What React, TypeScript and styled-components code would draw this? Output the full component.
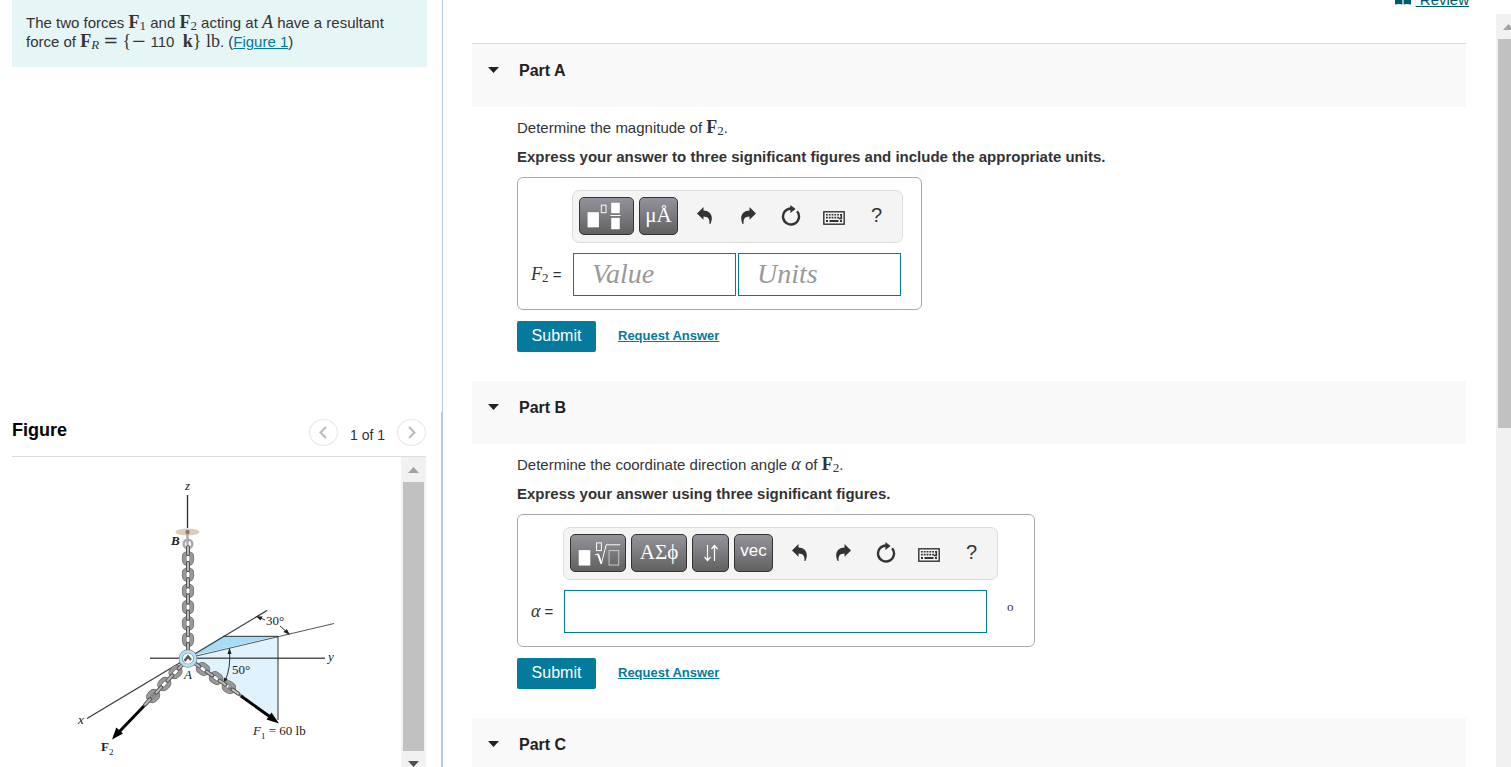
import React from "react";
import styled, { createGlobalStyle } from "styled-components";

const sans = `"Liberation Sans", Arial, sans-serif`;
const serif = `"Liberation Serif", "Times New Roman", serif`;

const GlobalStyle = createGlobalStyle`
  * { box-sizing: border-box; }
  body { margin: 0; background: #fff; color: #333; font-family: ${sans}; font-size: 15px; line-height: 19px; }
  button, input { font: inherit; color: inherit; }
  h2, h3, p { margin: 0; }
`;

const Page = styled.div`
  display: flex;
  height: 100vh;
  overflow: hidden;
`;

const LeftPane = styled.aside`
  flex: 0 0 443px;
  display: flex;
  flex-direction: column;
`;

const ProblemArea = styled.section`
  flex: 0 0 412px;
  padding: 0 15px 0 12px;
  border-right: 1px solid #b9cbe0;
`;

const ProblemBox = styled.div`
  padding: 13px 14px 16px;
  background: #e6f6f6;
`;

const FigureArea = styled.section`
  flex: 1;
  display: flex;
  flex-direction: column;
  min-height: 0;
  padding: 0 15px 0 12px;
  border-right: 2px solid #b9cbe0;
`;

const FigureHeader = styled.header`
  display: flex;
  justify-content: space-between;
  flex: 0 0 45px;
  padding-top: 7px;
  border-bottom: 1px solid #ddd;
`;

const FigureTitle = styled.h2`
  color: #000;
  font-size: 18px;
  line-height: 22px;
`;

const Pager = styled.div`
  display: flex;
  gap: 12px;
  height: 27px;
  font-size: 14px;
  line-height: 32px;
`;

const PagerButton = styled.button`
  display: flex;
  align-items: center;
  justify-content: center;
  width: 29px;
  height: 27px;
  padding: 0;
  border: 1px solid #e6e6e6;
  border-radius: 50%;
  background: #fff;
`;

const FigureViewport = styled.div`
  flex: 1;
  display: flex;
  min-height: 0;
  overflow: hidden;
`;

const FigureCanvas = styled.div`
  flex: 1;
  min-width: 0;
  svg { display: block; }
`;

const Track = styled.div<{ $width: number; $top?: number }>`
  flex: 0 0 ${(p) => p.$width}px;
  display: flex;
  flex-direction: column;
  align-items: flex-start;
  overflow: hidden;
  margin-top: ${(p) => p.$top ?? 0}px;
  padding-left: 2px;
  background: #f1f1f1;
`;

const TrackArrow = styled.div`
  flex: 0 0 25px;
  width: 21px;
  display: flex;
  align-items: center;
  justify-content: center;
`;

const Thumb = styled.div<{ $length: number }>`
  flex: 0 0 ${(p) => p.$length}px;
  width: 21px;
  background: #c1c1c1;
`;

const RightPane = styled.div`
  flex: 1;
  display: flex;
  min-width: 0;
`;

const Content = styled.main`
  flex: 1;
  min-width: 0;
  padding: 0 30px 0 29px;
`;

const ReviewBar = styled.div`
  display: flex;
  justify-content: flex-end;
  align-items: flex-start;
  gap: 5px;
  height: 43px;
  margin-right: -3px;
  overflow: hidden;
`;

const ReviewLink = styled.a`
  margin-top: -10px;
  color: #005a70;
  white-space: pre;
`;

const Part = styled.section<{ $ruled?: boolean }>`
  height: ${(p) => (p.$ruled ? 338 : 337)}px;
  border-top: ${(p) => (p.$ruled ? "1px solid #ddd" : "0")};
`;

const PartHeader = styled.button`
  display: flex;
  align-items: flex-start;
  gap: 20px;
  width: 100%;
  height: 63px;
  padding: 17px 16px;
  border: 0;
  background: #f9f9f9;
  text-align: left;
  svg { margin-top: 6px; }
`;

const PartTitle = styled.span`
  color: #222;
  font-size: 16px;
  font-weight: bold;
  line-height: 20px;
`;

const PartBody = styled.div`
  padding: 11px 45px 0;
`;

const Prompt = styled.p`
  margin-bottom: 10px;
`;

const Instruction = styled.p`
  margin-bottom: 11px;
  font-weight: bold;
`;

const AnswerBox = styled.div`
  width: fit-content;
  margin-bottom: 11px;
  padding: 12px 18px 13px 13px;
  border: 1px solid #aaa;
  border-radius: 6px;
`;

const Toolbar = styled.div<{ $indent: number }>`
  display: flex;
  align-items: center;
  width: fit-content;
  height: 53px;
  margin: 0 0 10px ${(p) => p.$indent}px;
  padding: 0 4px 2px 6px;
  border: 1px solid #ddd;
  border-radius: 7px;
  background: #f4f4f4;
`;

const DarkButton = styled.button<{ $width: number }>`
  display: flex;
  align-items: center;
  justify-content: center;
  width: ${(p) => p.$width}px;
  height: 38px;
  margin-right: 5px;
  padding: 0;
  border: 1px solid #333;
  border-radius: 5px;
  background: linear-gradient(#94939c, #616161);
  color: #fff;
`;

const SerifGlyphs = styled.span`
  font-family: ${serif};
  font-size: 21px;
`;

const VecText = styled.span`
  padding-bottom: 4px;
  font-size: 17px;
`;

const ToolButton = styled.button`
  display: flex;
  align-items: center;
  justify-content: center;
  width: 43px;
  height: 38px;
  padding: 0;
  border: 0;
  background: transparent;
  color: #333;
  font-size: 20px;
`;

const FieldRow = styled.div`
  display: flex;
  align-items: center;
`;

const FieldLabel = styled.label<{ $width: number }>`
  width: ${(p) => p.$width}px;
  white-space: nowrap;
`;

const Field = styled.input<{ $width: number }>`
  width: ${(p) => p.$width}px;
  height: 43px;
  margin-right: 2px;
  padding: 0 19px 2px 18px;
  border: 1px solid #047a9c;
  border-radius: 0;
  outline: 0;
  background: #fff;
  font-family: ${serif};
  font-size: 28px;
  &::placeholder { color: #999; font-style: italic; opacity: 1; }
`;

const Degree = styled.span`
  padding: 0 2px 10px 18px;
  font-size: 13px;
  font-family: ${serif};
`;

const Actions = styled.div`
  display: flex;
  align-items: center;
  gap: 22px;
`;

const SubmitButton = styled.button`
  width: 79px;
  height: 31px;
  padding: 0 0 2px;
  border: 0;
  border-radius: 2px;
  background: #047a9c;
  color: #fff;
  font-size: 16px;
`;

const TextLink = styled.a`
  color: #047a9c;
`;

const RequestLink = styled.a`
  color: #047a9c;
  font-size: 13px;
  font-weight: bold;
  margin-bottom: 2px;
`;

const MathText = styled.span<{ $bold?: boolean; $italic?: boolean }>`
  font-family: ${serif};
  font-size: 18px;
  line-height: 0;
  font-weight: ${(p) => (p.$bold ? "bold" : "normal")};
  font-style: ${(p) => (p.$italic ? "italic" : "normal")};
`;

const MathSign = styled.span`
  font-family: "DejaVu Serif", serif;
  font-size: 18px;
  line-height: 0;
`;

const Sub = styled.sub<{ $italic?: boolean }>`
  font-family: ${serif};
  font-size: 13px;
  line-height: 0;
  vertical-align: -2px;
  font-weight: normal;
  font-style: ${(p) => (p.$italic ? "italic" : "normal")};
`;

const VectorF = ({ sub }: { sub: string }) => (
  <>
    <MathText $bold>F</MathText>
    <Sub $italic={sub === "R"}>{sub}</Sub>
  </>
);

const Triangle = ({ color, down }: { color: string; down?: boolean }) => (
  <svg width="11" height="6" viewBox="0 0 11 6" aria-hidden="true">
    <path d={down ? "M0 0H11L5.5 6Z" : "M0 6H11L5.5 0Z"} fill={color} />
  </svg>
);

const Chevron = ({ right }: { right?: boolean }) => (
  <svg width="8" height="13" viewBox="0 0 8 13" fill="none" stroke="#bbb" strokeWidth="2">
    <path d={right ? "M1 1L6.5 6.5L1 12" : "M7 1L1.5 6.5L7 12"} />
  </svg>
);

const arrowPath = "M0 6.5L6.5 0V3.4C12.8 3.6 17.2 8.4 13.4 17H12.4C12.9 11.6 11 9.6 6.5 9.4V12.8Z";

const UndoIcon = () => (
  <svg width="16" height="17" viewBox="0 0 16 17"><path d={arrowPath} fill="#333" /></svg>
);

const RedoIcon = () => (
  <svg width="16" height="17" viewBox="0 0 16 17">
    <path d={arrowPath} fill="#333" transform="translate(16 0) scale(-1 1)" />
  </svg>
);

const ResetIcon = () => (
  <svg width="20" height="21" viewBox="0 0 20 21" fill="none">
    <path d="M16.1 6.3A8 8 0 1 1 10 3.5" stroke="#333" strokeWidth="2.4" />
    <path d="M9.4 0L14.6 4L9.4 8Z" fill="#333" />
  </svg>
);

const KeyboardIcon = () => (
  <svg width="22" height="18" viewBox="0 0 22 18" fill="none" stroke="#333">
    <rect x="0.8" y="4.8" width="20.4" height="12.4" strokeWidth="1.4" />
    <path d="M3 7.8H18M3 10.6H16" strokeWidth="1.6" strokeDasharray="1.8 1" />
    <path d="M3 14H5M6.5 14H15.5M17 14H19" strokeWidth="1.8" />
    <path d="M18.3 7V11.5H16" strokeWidth="1.6" />
  </svg>
);

const FractionIcon = () => (
  <svg width="56" height="36" viewBox="0 0 56 36" fill="#fff">
    <rect x="8" y="14" width="12" height="16" />
    <rect x="22.5" y="6.5" width="5" height="8" fill="none" stroke="#fff" />
    <rect x="33" y="4" width="9" height="11" />
    <rect x="32" y="17" width="11" height="1" />
    <rect x="33" y="20" width="9" height="12" />
  </svg>
);

const RootIcon = () => (
  <svg width="56" height="36" viewBox="0 0 56 36" fill="none" stroke="#fff">
    <rect x="8" y="15" width="12" height="16" fill="#fff" stroke="none" />
    <rect x="26.5" y="7.5" width="5" height="8" />
    <path d="M25 20L28 19L31.5 29L36.5 9.5H51" />
    <path d="M28 19L31.5 29" strokeWidth="2" />
    <rect x="39.5" y="15.5" width="10" height="15" stroke="#ccc" />
  </svg>
);

const UpDownIcon = () => (
  <svg width="16" height="18" viewBox="0 0 16 18" fill="none" stroke="#fff" strokeWidth="1.2">
    <path d="M4.5 1V16M1.5 13L4.5 16.5L7.5 13M11.5 17V2M8.5 5L11.5 1.5L14.5 5" />
  </svg>
);

const BookIcon = () => (
  <svg width="16" height="5" viewBox="0 0 16 5" fill="#005a70">
    <path d="M0 0H7.4V4.4Q4 3.6 0 4.6ZM8.6 0H16V4.6Q12 3.6 8.6 4.4Z" />
  </svg>
);

const CommonTools = () => (
  <>
    <ToolButton type="button" aria-label="Undo"><UndoIcon /></ToolButton>
    <ToolButton type="button" aria-label="Redo"><RedoIcon /></ToolButton>
    <ToolButton type="button" aria-label="Reset"><ResetIcon /></ToolButton>
    <ToolButton type="button" aria-label="Keyboard shortcuts"><KeyboardIcon /></ToolButton>
    <ToolButton type="button">?</ToolButton>
  </>
);

/* One run of chain: face-on links joined by edge-on links, drawn along +y. */
const Chain = ({ x, y, angle, count, pitch }: { x: number; y: number; angle: number; count: number; pitch: number }) => (
  <g transform={`translate(${x} ${y}) rotate(${angle})`}>
    {Array.from({ length: count }, (_, i) => (
      <g key={i} transform={`translate(0 ${i * pitch})`}>
        <rect x="-3.8" y="-5" width="7.6" height="10" rx="3.4" fill="none" stroke="#666" strokeWidth="4.6" />
        <rect x="-3.8" y="-5" width="7.6" height="10" rx="3.4" fill="none" stroke="#999" strokeWidth="3.4" />
      </g>
    ))}
    {Array.from({ length: count + 1 }, (_, i) => (
      <g key={i} transform={`translate(0 ${(i - 0.5) * pitch})`}>
        <rect x="-2" y="-5.5" width="4" height="11" rx="2" fill="#555" />
        <rect x="-1" y="-4.5" width="2" height="9" rx="1" fill="#bbb" />
      </g>
    ))}
  </g>
);

const ForceDiagram = () => (
  <svg width="389" height="310" viewBox="12 457 389 310" fontFamily={serif} fontSize="13" fill="#222" role="img" aria-label="Chains AB with forces F1 and F2 acting at A">
    <path d="M188 658L278 636V722Z" fill="#e0f2fd" />
    <path d="M192 656L223 636H278Z" fill="#a5dcf8" />
    <g stroke="#333" strokeWidth="1" fill="none">
      <path d="M187.5 495V528" strokeWidth="1.4" />
      <path d="M150 658.3H325" stroke="#555" strokeWidth="1.4" />
      <path d="M87 718.5L267 610.5" strokeWidth="1.2" />
      <path d="M190 657.5L334 623.5" stroke="#555" />
      <path d="M223 636.3H278V720" />
      <path d="M229.5 650Q231 668 225 681" />
      <path d="M265 620L258 617M280 626L288 633" />
    </g>
    <g fill="#222">
      <path d="M229.5 647.5L227.5 654H231.5ZM223.5 684.5L223.8 677.5L227.8 679ZM256 616.3L262.5 616.5L260.5 620.5ZM290 635L283.5 632L286.8 629Z" />
    </g>
    <ellipse cx="187.5" cy="532" rx="12" ry="3.5" fill="#dfccb8" />
    <circle cx="187.5" cy="532" r="2.2" fill="#887a70" />
    <circle cx="188" cy="544" r="4.3" fill="none" stroke="#aaa" strokeWidth="2.6" />
    <path d="M187.5 534V545" stroke="#aaa" strokeWidth="2.4" />
    <Chain x={188} y={558.5} angle={0} count={6} pitch={16.2} />
    <path d="M162 686L144 706M228 687L243 697" stroke="#888" strokeWidth="3" />
    <Chain x={175.5} y={672} angle={43} count={3} pitch={16.4} />
    <Chain x={203} y={669} angle={-55} count={3} pitch={15.8} />
    <circle cx="188" cy="658.5" r="7.2" fill="#fff" stroke="#6d8494" strokeWidth="4" />
    <circle cx="188" cy="658.5" r="7.2" fill="none" stroke="#b9e1f3" strokeWidth="2.8" />
    <path d="M184.5 661L188 656.5L191 660" fill="none" stroke="#555" strokeWidth="2.4" />
    <g stroke="#000" strokeWidth="3">
      <path d="M241 696L271 717.5M144 706L119 732" />
    </g>
    <path d="M279 723.5L266.5 719.5L271.5 712.5ZM112 739.5L116.3 727.5L123 733.5Z" fill="#000" />
    <g fontStyle="italic">
      <text x="185" y="490">z</text>
      <text x="171" y="545" fontWeight="bold">B</text>
      <text x="328" y="661">y</text>
      <text x="78" y="724">x</text>
      <text x="184" y="679">A</text>
    </g>
    <text x="266" y="625">30°</text>
    <text x="232" y="674">50°</text>
    <text x="101" y="751" fontWeight="bold">F<tspan dy="4" fontSize="9" fontWeight="normal">2</tspan></text>
    <text x="253" y="735"><tspan fontStyle="italic">F</tspan><tspan dy="4" fontSize="9">1</tspan><tspan dy="-4"> = 60 lb</tspan></text>
  </svg>
);

const PartHeading = ({ title }: { title: string }) => (
  <PartHeader type="button" aria-expanded="true">
    <Triangle color="#222" down />
    <PartTitle>{title}</PartTitle>
  </PartHeader>
);

const SubmitRow = () => (
  <Actions>
    <SubmitButton type="submit">Submit</SubmitButton>
    <RequestLink href="#request">Request Answer</RequestLink>
  </Actions>
);

export default function App() {
  return (
    <Page>
      <GlobalStyle />
      <LeftPane>
        <ProblemArea>
          <ProblemBox>
            <p>
              The two forces <VectorF sub="1" /> and <VectorF sub="2" /> acting at <MathText $italic>A</MathText> have a resultant
              <br />
              force of <VectorF sub="R" /> <MathSign>=</MathSign> <MathText>{"{"}</MathText><MathSign>−</MathSign> 110 &nbsp;<MathText $bold>k</MathText>
              <MathText>{"}"} lb</MathText>. (<TextLink href="#figure">Figure 1</TextLink>)
            </p>
          </ProblemBox>
        </ProblemArea>
        <FigureArea id="figure">
          <FigureHeader>
            <FigureTitle>Figure</FigureTitle>
            <Pager>
              <PagerButton type="button" aria-label="Previous figure"><Chevron /></PagerButton>
              <span>1 of 1</span>
              <PagerButton type="button" aria-label="Next figure"><Chevron right /></PagerButton>
            </Pager>
          </FigureHeader>
          <FigureViewport>
            <FigureCanvas><ForceDiagram /></FigureCanvas>
            <Track $width={25}>
              <TrackArrow><Triangle color="#a3a3a3" /></TrackArrow>
              <Thumb $length={269} />
              <TrackArrow><Triangle color="#505050" down /></TrackArrow>
            </Track>
          </FigureViewport>
        </FigureArea>
      </LeftPane>
      <RightPane>
        <Content>
          <ReviewBar>
            <BookIcon />
            <ReviewLink href="#review"> Review</ReviewLink>
          </ReviewBar>
          <Part $ruled>
            <PartHeading title="Part A" />
            <PartBody>
              <Prompt>Determine the magnitude of <VectorF sub="2" />.</Prompt>
              <Instruction>Express your answer to three significant figures and include the appropriate units.</Instruction>
              <AnswerBox>
                <Toolbar $indent={41}>
                  <DarkButton type="button" $width={55} aria-label="Templates"><FractionIcon /></DarkButton>
                  <DarkButton type="button" $width={39}><SerifGlyphs>μÅ</SerifGlyphs></DarkButton>
                  <CommonTools />
                </Toolbar>
                <FieldRow>
                  <FieldLabel $width={42} htmlFor="value">
                    <MathText $italic>F</MathText><Sub>2</Sub> =
                  </FieldLabel>
                  <Field id="value" $width={163} placeholder="Value" />
                  <Field $width={163} placeholder="Units" aria-label="Units" />
                </FieldRow>
              </AnswerBox>
              <SubmitRow />
            </PartBody>
          </Part>
          <Part>
            <PartHeading title="Part B" />
            <PartBody>
              <Prompt>Determine the coordinate direction angle <MathText $italic>α</MathText> of <VectorF sub="2" />.</Prompt>
              <Instruction>Express your answer using three significant figures.</Instruction>
              <AnswerBox>
                <Toolbar $indent={32}>
                  <DarkButton type="button" $width={56} aria-label="Templates"><RootIcon /></DarkButton>
                  <DarkButton type="button" $width={56}><SerifGlyphs>ΑΣϕ</SerifGlyphs></DarkButton>
                  <DarkButton type="button" $width={37} aria-label="Arrows"><UpDownIcon /></DarkButton>
                  <DarkButton type="button" $width={39}><VecText>vec</VecText></DarkButton>
                  <CommonTools />
                </Toolbar>
                <FieldRow>
                  <FieldLabel $width={33} htmlFor="alpha">
                    <MathText $italic>α</MathText> =
                  </FieldLabel>
                  <Field id="alpha" $width={423} />
                  <Degree>o</Degree>
                </FieldRow>
              </AnswerBox>
              <SubmitRow />
            </PartBody>
          </Part>
          <Part>
            <PartHeading title="Part C" />
          </Part>
        </Content>
        <Track $width={15} $top={14}>
          <TrackArrow><Triangle color="#a3a3a3" /></TrackArrow>
          <Thumb $length={389} />
        </Track>
      </RightPane>
    </Page>
  );
}
